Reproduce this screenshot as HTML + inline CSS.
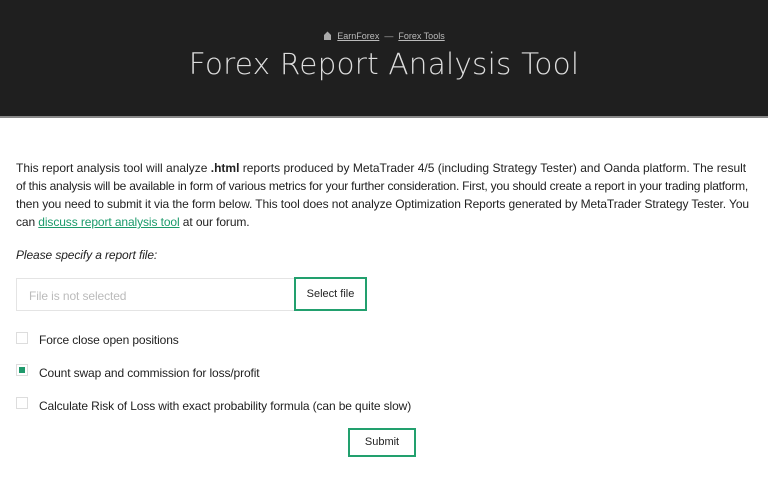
<!DOCTYPE html>
<html><head><style>
body{margin:0;width:768px;height:492px;background:#fff;font-family:"Liberation Sans",sans-serif;overflow:hidden;position:relative}
.hdr{position:absolute;left:0;top:0;width:768px;height:116px;background:#1f1f1f;border-bottom:2px solid #888}
.bc{position:absolute;top:31px;left:0;width:768px;text-align:center;font-size:9px;color:#aaa}
.bc span{text-decoration:underline;color:#bbb}
.title{position:absolute;top:47px;left:0;width:768px;text-align:center;font-size:29.5px;color:#ddd;letter-spacing:0.2px;font-family:"DejaVu Sans","Liberation Sans",sans-serif;font-weight:200}
p{position:absolute;left:16px;top:159px;width:760px;margin:0;font-size:12px;line-height:18px;color:#222;letter-spacing:-0.1px;white-space:nowrap}
a{color:#1a9a6a;text-decoration:underline}
.lbl{position:absolute;left:16px;top:248px;font-size:12px;font-style:italic;color:#222;letter-spacing:-0.1px}
.inp{position:absolute;left:16px;top:278px;width:344px;height:33px;border:1px solid #e4e4e4;box-sizing:border-box;font-size:12px;color:#bbb;padding:10px 12px;letter-spacing:-0.1px}
.btn{position:absolute;border:2px solid #22a06e;background:#fff;box-sizing:border-box;font-size:11px;color:#222;text-align:center}
.cb{position:absolute;left:16px;width:12px;height:12px;border:1px solid #ddd;box-sizing:border-box}
.ct{position:absolute;left:39px;font-size:12px;color:#222;letter-spacing:-0.12px}
</style></head><body>
<div class="hdr"></div>
<div class="bc"><svg width="9" height="9" viewBox="0 0 9 9" style="vertical-align:-1px"><path d="M1 4 L4.5 0.5 L8 4 V9 H1Z" fill="#aaa"/></svg>&nbsp; <span>EarnForex</span> &nbsp;—&nbsp; <span>Forex Tools</span></div>
<div class="title">Forex Report Analysis Tool</div>
<p><span style="letter-spacing:0">This report analysis tool will analyze <b>.html</b> reports produced by MetaTrader 4/5 (including Strategy Tester) and Oanda platform. The result</span><br><span style="letter-spacing:-0.22px">of this analysis will be available in form of various metrics for your further consideration. First, you should create a report in your trading platform,</span><br>then you need to submit it via the form below. This tool does not analyze Optimization Reports generated by MetaTrader Strategy Tester. You<br>can <a>discuss report analysis tool</a> at our forum.</p>
<div class="lbl">Please specify a report file:</div>
<div class="inp">File is not selected</div>
<div class="btn" style="left:294px;top:277px;width:73px;height:34px;line-height:30px">Select file</div>
<div class="cb" style="top:332px"></div><div class="ct" style="top:333px">Force close open positions</div>
<div class="cb" style="top:364px"><div style="position:absolute;left:2px;top:2px;width:6px;height:6px;background:#1f9a6c"></div></div><div class="ct" style="top:366px">Count swap and commission for loss/profit</div>
<div class="cb" style="top:397px"></div><div class="ct" style="top:399px">Calculate Risk of Loss with exact probability formula (can be quite slow)</div>
<div class="btn" style="left:348px;top:428px;width:68px;height:29px;line-height:25px">Submit</div>
</body></html>
